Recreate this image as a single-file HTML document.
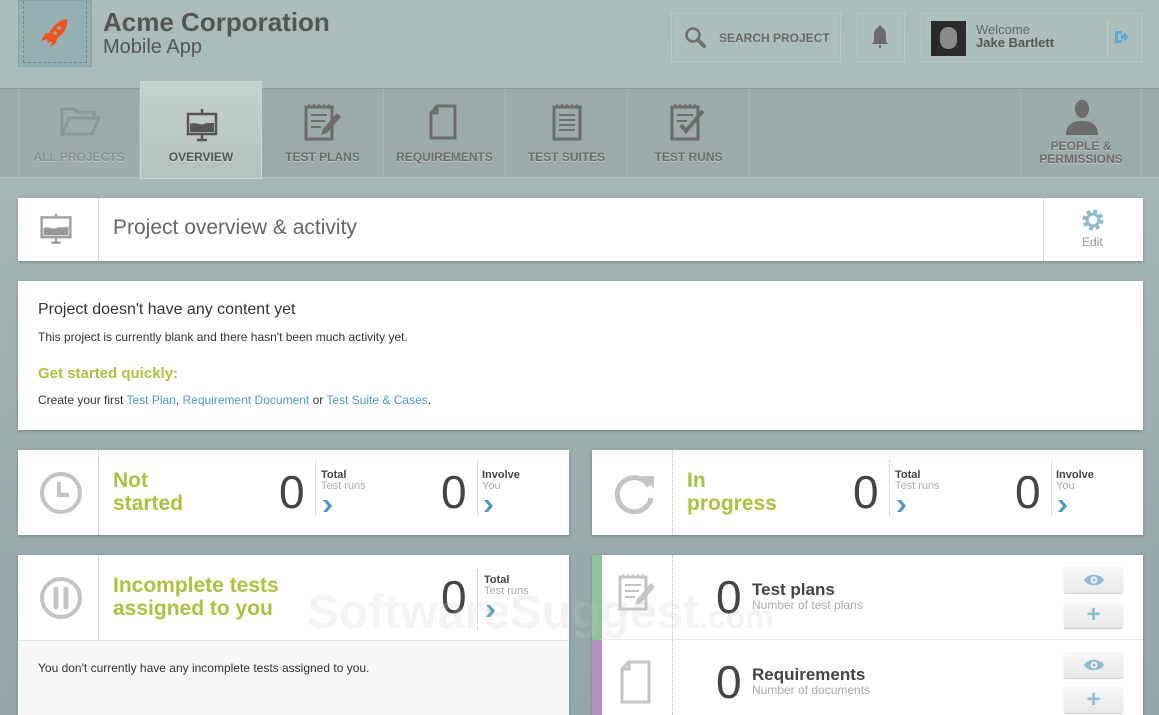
<!DOCTYPE html>
<html><head><meta charset="utf-8"><style>
*{box-sizing:border-box;margin:0;padding:0}
html,body{width:1159px;height:715px;overflow:hidden}
body{font-family:"Liberation Sans",sans-serif;background:linear-gradient(#abbebb,#9fb3b2 300px,#92a6a8 715px);position:relative;color:#444}
.a{position:absolute}
.box{position:absolute;border:1px solid #b8c9c6;background:rgba(255,255,255,0.04);box-shadow:inset 0 0 0 1px rgba(0,0,0,0.03)}
.nav{position:absolute;left:0;top:88px;width:1159px;height:90px;background:#9cacaa;border-top:1px solid #8d9c9a;border-bottom:1px solid #b6c5c2}
.tab{position:absolute;top:0;height:89px;width:122px;border-right:1px solid #a9b8b5;text-align:center;font-size:12px;font-weight:bold;color:#6c6c6c;text-shadow:0 1px 0 rgba(255,255,255,.35)}
.tab span{position:absolute;left:0;right:0;top:61px}
.tab svg{position:absolute;left:41px;top:14px}
.card{position:absolute;background:#fff;box-shadow:0 1px 3px rgba(0,0,0,.25)}
.vd{position:absolute;top:0;bottom:0;border-left:1px dotted #bbb}
.big{position:absolute;font-size:46px;color:#444;font-weight:normal}
.lab{position:absolute;font-size:11px;font-weight:bold;color:#444;line-height:11px}
.lab i{display:block;font-style:normal;font-weight:normal;color:#aaa}
.chev{position:absolute;width:10px;height:14px}
.green{color:#a7c43c;font-weight:bold;font-size:21px;line-height:23px;position:absolute}
.btn{position:absolute;left:1064px;width:59px;height:26px;background:linear-gradient(#f7f7f7,#e8e8e8);border-radius:2px;box-shadow:0 1px 1px rgba(0,0,0,.2);color:#8bbcd3;text-align:center}
a{color:#4a9cc2;text-decoration:none}
</style></head><body>
<div class="a" style="left:18px;top:0;width:74px;height:67px;background:#95b0b2;border:1px solid #8aa2a6">
<div class="a" style="left:4px;top:0;width:64px;height:62px;border:1px dashed #6f8a8d;border-top:none"></div>
<svg class="a" style="left:18px;top:15px" width="36" height="36" viewBox="0 0 36 36"><path d="M30 3 C22 4 16 10 12 17 L8 18 L4 25 L10 23 L11 27 L15 25 L13 31 L19 27 L20 22 C27 18 31 11 30 3Z" fill="#f2531c"/><circle cx="22" cy="12" r="1.8" fill="#95b0b2"/><circle cx="18" cy="17" r="1.8" fill="#95b0b2"/></svg>
</div>
<div class="a" style="left:103px;top:7px;font-size:26px;font-weight:bold;color:#555">Acme Corporation</div>
<div class="a" style="left:103px;top:36px;font-size:20px;color:#555">Mobile App</div>
<div class="box" style="left:671px;top:13px;width:170px;height:49px"></div>
<svg class="a" style="left:684px;top:26px" width="24" height="24" viewBox="0 0 24 24"><circle cx="9" cy="9" r="6.5" fill="none" stroke="#6e6e6e" stroke-width="2.5"/><path d="M14 14l6 6" stroke="#6e6e6e" stroke-width="4" stroke-linecap="round"/></svg>
<div class="a" style="left:719px;top:31px;font-size:12px;font-weight:bold;color:#6a6a6a">SEARCH PROJECT</div>
<div class="box" style="left:857px;top:13px;width:48px;height:49px"></div>
<svg class="a" style="left:869px;top:23px" width="22" height="28" viewBox="0 0 22 28"><path d="M11 2c-1 0-1 1-1 2C6 5 5 9 5 13v5l-2 3h16l-2-3v-5c0-4-1-8-5-9 0-1 0-2-1-2z" fill="#6b6b6b"/><rect x="10" y="22" width="2" height="3" fill="#6b6b6b"/></svg>
<div class="box" style="left:921px;top:13px;width:221px;height:49px"></div>
<div class="a" style="left:931px;top:21px;width:35px;height:35px;background:#2a2a2a"><div class="a" style="left:9px;top:6px;width:17px;height:22px;border-radius:8px;background:#8a8a8a"></div></div>
<div class="a" style="left:976px;top:23px;font-size:13px;color:#666;line-height:13px">Welcome<br><b style="color:#555">Jake Bartlett</b></div>
<div class="a" style="left:1107px;top:21px;height:35px;border-left:1px dotted #ddd"></div>
<svg class="a" style="left:1113px;top:29px" width="16" height="16" viewBox="0 0 16 16"><path d="M2 2h7v3H5v6h4v3H2z" fill="#5ea7cf"/><path d="M8 6h3V3l4 5-4 5v-3H8z" fill="#5ea7cf"/></svg>
<div class="nav">
<div class="tab" style="left:18px;border-left:1px solid #a9b8b5"><svg width="40" height="36" viewBox="0 0 40 36"><path d="M2 6h12l3 3h17v6H9L2 31z M2 31L9 15h30l-7 16z" fill="none" stroke="#8b9694" stroke-width="3"/></svg><span style="color:#88908f">ALL PROJECTS</span></div>
<div class="tab" style="left:140px;top:-8px;height:98px;background:linear-gradient(#c4d2cf,#b3c2bf);border:1px solid #c9d6d3"><svg style="top:26px" width="40" height="36" viewBox="0 0 40 36"><rect x="6" y="6" width="28" height="20" fill="none" stroke="#555" stroke-width="2.5"/><path d="M8 24v-8c6-3 10 3 16-1l8 0v9z" fill="#555"/><path d="M20 1v5M20 26v6M15 32h10" stroke="#555" stroke-width="2.5"/></svg><span style="top:68px;color:#555">OVERVIEW</span></div>
<div class="tab" style="left:262px"><svg width="40" height="38" viewBox="0 0 40 38"><rect x="3" y="4" width="26" height="32" fill="none" stroke="#6c6c6c" stroke-width="3"/><path d="M8 12h16M8 18h14M8 24h10" stroke="#6c6c6c" stroke-width="2"/><path d="M6 1v4M11 1v4M16 1v4M21 1v4M26 1v4" stroke="#6c6c6c" stroke-width="1.5"/><path d="M34 10l4 4-14 16-6 2 2-6z" fill="#6c6c6c"/></svg><span>TEST PLANS</span></div>
<div class="tab" style="left:384px"><svg width="40" height="38" viewBox="0 0 40 38"><path d="M12 3h18v32H6V10z M6 10h6V3" fill="none" stroke="#6c6c6c" stroke-width="3"/></svg><span>REQUIREMENTS</span></div>
<div class="tab" style="left:506px"><svg width="40" height="38" viewBox="0 0 40 38"><rect x="7" y="4" width="26" height="32" fill="none" stroke="#6c6c6c" stroke-width="3"/><path d="M12 12h16M12 17h16M12 22h16M12 27h16" stroke="#6c6c6c" stroke-width="2"/><path d="M10 1v4M15 1v4M20 1v4M25 1v4M30 1v4" stroke="#6c6c6c" stroke-width="1.5"/></svg><span>TEST SUITES</span></div>
<div class="tab" style="left:628px"><svg width="40" height="38" viewBox="0 0 40 38"><rect x="3" y="4" width="26" height="32" fill="none" stroke="#6c6c6c" stroke-width="3"/><path d="M8 12h16M8 18h10" stroke="#6c6c6c" stroke-width="2"/><path d="M6 1v4M11 1v4M16 1v4M21 1v4M26 1v4" stroke="#6c6c6c" stroke-width="1.5"/><path d="M12 22l5 6 17-20" fill="none" stroke="#6c6c6c" stroke-width="4"/></svg><span>TEST RUNS</span></div>
<div class="tab" style="left:1020px;border-left:1px solid #a9b8b5"><svg style="top:10px" width="40" height="38" viewBox="0 0 40 38"><ellipse cx="20" cy="10" rx="7" ry="9" fill="#6c6c6c"/><path d="M4 36c0-10 6-14 16-14s16 4 16 14z" fill="#6c6c6c"/></svg><span style="top:51px;line-height:13px">PEOPLE &amp;<br>PERMISSIONS</span></div>
</div>
<div class="card" style="left:18px;top:198px;width:1125px;height:63px">
<div class="vd" style="left:80px"></div><div class="vd" style="left:1025px"></div>
<svg class="a" style="left:20px;top:14px" width="36" height="36" viewBox="0 0 40 36"><rect x="4" y="4" width="32" height="22" fill="none" stroke="#999" stroke-width="2.5"/><path d="M6 24v-8c6-3 10 3 16-1l12 0v9z" fill="#999"/><path d="M20 0v4M20 26v6M15 32h10" stroke="#999" stroke-width="2.5"/></svg>
<div class="a" style="left:95px;top:18px;font-size:21px;color:#666">Project overview &amp; activity</div>
<svg class="a" style="left:1062px;top:9px" width="26" height="26" viewBox="0 0 26 26"><circle cx="13" cy="13" r="8" fill="none" stroke="#8eb8cf" stroke-width="5" stroke-dasharray="3.5 2.8"/><circle cx="13" cy="13" r="6" fill="none" stroke="#8eb8cf" stroke-width="3"/></svg>
<div class="a" style="left:1064px;top:37px;font-size:12px;color:#999">Edit</div>
</div>
<div class="card" style="left:18px;top:281px;width:1125px;height:149px">
<div class="a" style="left:20px;top:20px;font-size:16px;color:#333">Project doesn't have any content yet</div>
<div class="a" style="left:20px;top:49px;font-size:12px;color:#333">This project is currently blank and there hasn't been much activity yet.</div>
<div class="a" style="left:20px;top:84px;font-size:15px;font-weight:bold;color:#a7c43c">Get started quickly:</div>
<div class="a" style="left:20px;top:112px;font-size:12px;color:#333">Create your first <a>Test Plan</a>, <a>Requirement Document</a> or <a>Test Suite &amp; Cases</a>.</div>
</div>
<svg width="0" height="0" style="position:absolute"><defs><symbol id="cv" viewBox="0 0 10 14"><path d="M1 1h4l5 6-5 6H1l5-6z" fill="#4b97bf"/></symbol></defs></svg>
<div class="card" style="left:18px;top:450px;width:551px;height:85px">
<div class="vd" style="left:80px"></div>
<svg class="a" style="left:20px;top:20px" width="46" height="46" viewBox="0 0 46 46"><circle cx="23" cy="23" r="19" fill="none" stroke="#c4c4c4" stroke-width="4"/><path d="M21 12v13h10" fill="none" stroke="#c4c4c4" stroke-width="4"/></svg>
<div class="green" style="left:95px;top:19px">Not<br>started</div>
<div class="big" style="left:261px;top:15px">0</div><div class="vd" style="left:297px;top:10px;bottom:20px"></div>
<div class="lab" style="left:303px;top:20px">Total<i>Test runs</i></div><svg class="chev" style="left:304px;top:49px"><use href="#cv"/></svg>
<div class="big" style="left:423px;top:15px">0</div><div class="vd" style="left:459px;top:10px;bottom:20px"></div>
<div class="lab" style="left:464px;top:20px">Involve<i>You</i></div><svg class="chev" style="left:465px;top:49px"><use href="#cv"/></svg>
</div>
<div class="card" style="left:592px;top:450px;width:551px;height:85px">
<div class="vd" style="left:80px"></div>
<svg class="a" style="left:20px;top:20px" width="46" height="46" viewBox="0 0 46 46"><path d="M37 16A17 17 0 1 0 39 28" fill="none" stroke="#c4c4c4" stroke-width="5"/><path d="M30 6l12 0 0 13z" fill="#c4c4c4"/></svg>
<div class="green" style="left:95px;top:19px">In<br>progress</div>
<div class="big" style="left:261px;top:15px">0</div><div class="vd" style="left:297px;top:10px;bottom:20px"></div>
<div class="lab" style="left:303px;top:20px">Total<i>Test runs</i></div><svg class="chev" style="left:304px;top:49px"><use href="#cv"/></svg>
<div class="big" style="left:423px;top:15px">0</div><div class="vd" style="left:459px;top:10px;bottom:20px"></div>
<div class="lab" style="left:464px;top:20px">Involve<i>You</i></div><svg class="chev" style="left:465px;top:49px"><use href="#cv"/></svg>
</div>
<div class="card" style="left:18px;top:555px;width:551px;height:170px">
<div class="vd" style="left:80px;bottom:auto;height:85px"></div>
<svg class="a" style="left:20px;top:20px" width="46" height="46" viewBox="0 0 46 46"><circle cx="23" cy="23" r="19" fill="none" stroke="#c4c4c4" stroke-width="4"/><path d="M18 14v18M28 14v18" stroke="#c4c4c4" stroke-width="5" stroke-linecap="round"/></svg>
<div class="green" style="left:95px;top:19px">Incomplete tests<br>assigned to you</div>
<div class="big" style="left:423px;top:15px">0</div><div class="vd" style="left:459px;top:15px;bottom:auto;height:60px"></div>
<div class="lab" style="left:466px;top:20px">Total<i>Test runs</i></div><svg class="chev" style="left:467px;top:49px"><use href="#cv"/></svg>
<div class="a" style="left:0;top:85px;width:551px;height:85px;background:#f7f7f7;border-top:1px solid #e4e4e4"></div>
<div class="a" style="left:20px;top:106px;font-size:12px;color:#333">You don't currently have any incomplete tests assigned to you.</div>
</div>
<div class="card" style="left:592px;top:555px;width:551px;height:170px">
<div class="a" style="left:0;top:0;width:10px;height:85px;background:#8fc39c"></div>
<div class="a" style="left:0;top:85px;width:10px;height:85px;background:#b38fbf"></div>
<div class="vd" style="left:80px"></div>
<div class="a" style="left:10px;top:84px;width:541px;border-top:1px solid #e8e8e8"></div>
<svg class="a" style="left:25px;top:18px" width="40" height="38" viewBox="0 0 40 38"><rect x="3" y="4" width="26" height="32" fill="none" stroke="#c4c4c4" stroke-width="3"/><path d="M8 12h16M8 18h14M8 24h10" stroke="#c4c4c4" stroke-width="2"/><path d="M6 1v4M11 1v4M16 1v4M21 1v4M26 1v4" stroke="#c4c4c4" stroke-width="1.5"/><path d="M34 10l4 4-14 16-6 2 2-6z" fill="#c4c4c4"/></svg>
<svg class="a" style="left:25px;top:104px" width="40" height="46" viewBox="0 0 40 46"><path d="M12 3h20v40H5V10z M5 10h7V3" fill="none" stroke="#c4c4c4" stroke-width="3"/></svg>
<div class="big" style="left:124px;top:15px">0</div>
<div class="a" style="left:160px;top:25px;font-size:17px;font-weight:bold;color:#444">Test plans</div>
<div class="a" style="left:160px;top:43px;font-size:12px;color:#aaa">Number of test plans</div>
<div class="big" style="left:124px;top:100px">0</div>
<div class="a" style="left:160px;top:110px;font-size:17px;font-weight:bold;color:#444">Requirements</div>
<div class="a" style="left:160px;top:128px;font-size:12px;color:#aaa">Number of documents</div>
</div>
<div class="btn" style="top:567px"><svg width="22" height="14" viewBox="0 0 22 14" style="margin-top:6px"><path d="M1 7C5 0 17 0 21 7 17 14 5 14 1 7z" fill="#8bbcd3"/><circle cx="11" cy="7" r="3.5" fill="#f2f2f2"/><circle cx="11" cy="7" r="1.5" fill="#8bbcd3"/></svg></div>
<div class="btn" style="top:602px;font-size:24px;line-height:26px;font-weight:bold">+</div>
<div class="btn" style="top:652px"><svg width="22" height="14" viewBox="0 0 22 14" style="margin-top:6px"><path d="M1 7C5 0 17 0 21 7 17 14 5 14 1 7z" fill="#8bbcd3"/><circle cx="11" cy="7" r="3.5" fill="#f2f2f2"/><circle cx="11" cy="7" r="1.5" fill="#8bbcd3"/></svg></div>
<div class="btn" style="top:687px;font-size:24px;line-height:26px;font-weight:bold">+</div>
<div class="a" style="left:307px;top:585px;font-size:48px;font-weight:bold;color:rgba(200,200,200,.22)">SoftwareSuggest<span style="font-size:32px">.com</span></div>
</body></html>
